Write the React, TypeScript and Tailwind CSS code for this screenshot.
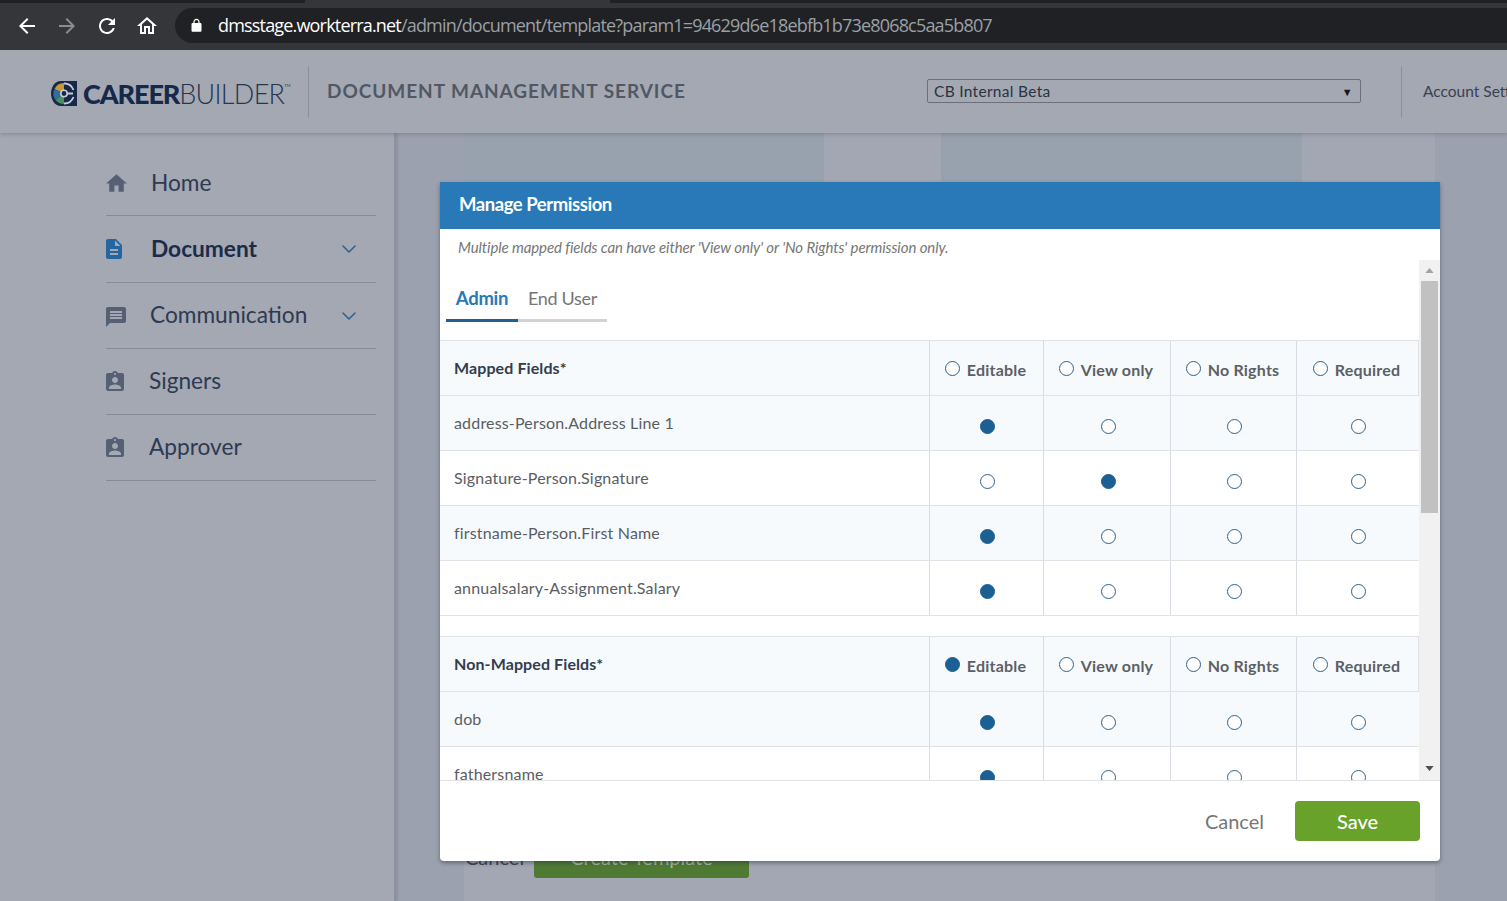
import type { ReactNode } from "react";
import { ChevronDown } from "lucide-react";

const paths = {
  back: "M20 11H7.83l5.59-5.59L12 4l-8 8 8 8 1.41-1.41L7.83 13H20v-2z",
  forward: "M12 4l-1.41 1.41L16.17 11H4v2h12.17l-5.58 5.59L12 20l8-8z",
  reload:
    "M17.65 6.35C16.2 4.9 14.21 4 12 4c-4.42 0-7.99 3.58-7.99 8s3.57 8 7.99 8c3.73 0 6.84-2.55 7.73-6h-2.08c-.82 2.33-3.04 4-5.65 4-3.31 0-6-2.69-6-6s2.69-6 6-6c1.66 0 3.14.69 4.22 1.78L13 11h7V4l-2.35 2.35z",
  homeOutline: "M12 5.69l5 4.5V18h-2v-6H9v6H7v-7.81l5-4.5M12 3L2 12h3v8h6v-6h2v6h6v-8h3L12 3z",
  lock: "M18 8h-1V6c0-2.76-2.24-5-5-5S7 3.24 7 6v2H6c-1.1 0-2 .9-2 2v10c0 1.1.9 2 2 2h12c1.1 0 2-.9 2-2V10c0-1.1-.9-2-2-2zM9 8V6c0-1.66 1.34-3 3-3s3 1.34 3 3v2H9z",
  home: "M10 20v-6h4v6h5v-8h3L12 3 2 12h3v8z",
  doc: "M14 2H6c-1.1 0-1.99.9-1.99 2L4 20c0 1.1.89 2 1.99 2H18c1.1 0 2-.9 2-2V8l-6-6zm2 16H8v-2h8v2zm0-4H8v-2h8v2zm-3-5V3.5L18.5 9H13z",
  message:
    "M20 2H4c-1.1 0-1.99.9-1.99 2L2 22l4-4h14c1.1 0 2-.9 2-2V4c0-1.1-.9-2-2-2zm-2 12H6v-2h12v2zm0-3H6V9h12v2zm0-3H6V6h12v2z",
  person:
    "M19 3h-4.18C14.4 1.84 13.3 1 12 1c-1.3 0-2.4.84-2.82 2H5c-1.1 0-2 .9-2 2v14c0 1.1.9 2 2 2h14c1.1 0 2-.9 2-2V5c0-1.1-.9-2-2-2zm-7 0c.55 0 1 .45 1 1s-.45 1-1 1-1-.45-1-1 .45-1 1-1zm0 4c1.66 0 3 1.34 3 3s-1.34 3-3 3-3-1.34-3-3 1.34-3 3-3zm6 12H6v-1.4c0-2 4-3.1 6-3.1s6 1.1 6 3.1V19z",
};

const Icon = ({ d, className }: { d: string; className: string }) => (
  <svg viewBox="0 0 24 24" fill="currentColor" className={className}>
    <path d={d} />
  </svg>
);

const nav = [
  { label: "Home", icon: paths.home, h: "h-[83px] pt-[18px]", icon2: "size-[25px] -ml-[2px]", textX: "ml-[22px]" },
  { label: "Document", icon: paths.doc, active: true, chevron: true, h: "h-[67px]", icon2: "size-[24px] -ml-[4px]", textX: "ml-[25px]" },
  { label: "Communication", icon: paths.message, chevron: true, h: "h-[66px]", icon2: "size-[24px] -ml-[2px] mt-[2px]", textX: "ml-[22px]" },
  { label: "Signers", icon: paths.person, h: "h-[66px]", icon2: "size-[24px] -ml-[3px]", textX: "ml-[22px]" },
  { label: "Approver", icon: paths.person, h: "h-[66px]", icon2: "size-[24px] -ml-[3px]", textX: "ml-[22px]" },
];

// which radio is on in each row: 0 editable, 1 view only
const mapped = [
  { name: "address-Person.Address Line 1", on: 0, tint: true },
  { name: "Signature-Person.Signature", on: 1 },
  { name: "firstname-Person.First Name", on: 0, tint: true },
  { name: "annualsalary-Assignment.Salary", on: 0 },
];
const nonMapped = [
  { name: "dob", on: 0, tint: true },
  { name: "fathersname", on: 0 },
];
const columns = ["Editable", "View only", "No Rights", "Required"];

const gridCols = "grid grid-cols-[489px_114px_127px_126px_122px]";

const Radio = ({ on }: { on?: boolean }) => (
  <span
    className={
      "block size-[15px] shrink-0 rounded-full border " +
      (on ? "border-[#1c5f93] bg-[#1c5f93]" : "border-[#2f6189] bg-white")
    }
  />
);

const Cell = ({ children, first }: { children: ReactNode; first?: boolean }) => (
  <div className={"flex h-[54px] items-center " + (first ? "pl-[14px]" : "justify-center border-l border-[#d9dde3]")}>
    {children}
  </div>
);

const HeaderRow = ({ title, on }: { title: string; on?: number }) => (
  <div className={gridCols + " w-[979px] border-y border-r border-[#dfe3e8] bg-[#f6fafd]"}>
    <Cell first>
      <span className="text-[16px] font-bold tracking-[0.1px] text-[#333d4f]">{title}</span>
    </Cell>
    {columns.map((c, i) => (
      <Cell key={c}>
        <span className="mr-[2px] mt-[4px] flex items-center gap-[7px]">
          <span className="mb-[3px]">
            <Radio on={on === i} />
          </span>
          <span className="text-[16px] font-bold tracking-[0.2px] text-[#5c5f66]">{c}</span>
        </span>
      </Cell>
    ))}
  </div>
);

const FieldRow = ({ name, on, tint }: { name: string; on: number; tint?: boolean }) => (
  <div className={gridCols + " border-b border-[#dfe3e8] " + (tint ? "bg-[#f6fafd]" : "bg-white")}>
    <Cell first>
      <span className="mb-[1px] text-[16px] tracking-[0.17px] text-[#5a5d63]">{name}</span>
    </Cell>
    {columns.map((c, i) => (
      <Cell key={c}>
        <span className="ml-[2px] mt-[6px]">
          <Radio on={on === i} />
        </span>
      </Cell>
    ))}
  </div>
);

const Logo = () => (
  <div className="mt-[4px] flex items-center">
    <svg viewBox="0 0 26 26" className="size-[26px]">
      <path d="M10 0H26V25H10C3 25 0 18 0 12.5S3 0 10 0z" fill="#16294a" />
      <path d="M13 2A10.5 10.5 0 0 0 3.5 8L13 12.5z" fill="#c69a3a" />
      <path d="M3.5 8A10.5 10.5 0 0 0 4.5 19L13 12.5z" fill="#2f6f9f" />
      <path d="M4.5 19A10.5 10.5 0 0 0 13 23L13 12.5z" fill="#4d8d5f" />
      <path
        d="M13 2.5A10 10 0 0 1 22.5 9M22.5 16A10 10 0 0 1 13 22.5M10 12.5H22"
        fill="none"
        stroke="#c9ccd4"
        strokeWidth="1.8"
      />
      <circle cx="13" cy="12.5" r="3.2" fill="#16294a" stroke="#c9ccd4" strokeWidth="1.6" />
    </svg>
    <span className="ml-[6px] text-[27px] font-black leading-none tracking-[-1.1px] text-[#16294a]">CAREER</span>
    <span className="text-[27px] font-light leading-none tracking-[-0.7px] text-[#27354f]">BUILDER</span>
    <span className="mb-[15px] text-[4px] leading-none text-[#27354f]">TM</span>
  </div>
);

const App = () => {
  return (
    <div className="relative h-[901px] w-full overflow-hidden bg-[#9ca1af] font-[Lato,sans-serif]">
      {/* Browser toolbar */}
      <div className="h-[50px] bg-[#35363a]">
        <div className="flex h-[3px] justify-between">
          <div className="w-[305px] bg-[#202124]" />
          <div className="w-[897px] bg-[#202124]" />
        </div>
        <div className="flex h-[47px] items-start pt-[5px]">
          <div className="flex h-[35px] w-[175px] shrink-0 items-center pl-[15px] text-white">
            <Icon d={paths.back} className="size-[24px]" />
            <Icon d={paths.forward} className="ml-[16px] size-[24px] text-[#8a8c90]" />
            <Icon d={paths.reload} className="ml-[16px] size-[24px]" />
            <Icon d={paths.homeOutline} className="ml-[16px] size-[24px]" />
          </div>
          <div className="flex h-[35px] flex-1 items-center rounded-l-full bg-[#202124] pl-[14px]">
            <Icon d={paths.lock} className="size-[15px] text-white" />
            <span className="ml-[14px] whitespace-nowrap font-['Open_Sans',sans-serif] text-[18px] tracking-[-0.82px] text-[#9aa0a6]">
              <span className="text-white">dmsstage.workterra.net</span>
              /admin/document/template?param1=94629d6e18ebfb1b73e8068c5aa5b807
            </span>
          </div>
        </div>
      </div>

      {/* App header */}
      <header className="relative z-10 flex h-[83px] items-center bg-[#a3a8b3] shadow-[0_1px_4px_rgba(60,70,90,0.35)]">
        <div className="flex h-[52px] w-[309px] shrink-0 items-center border-r border-[#8b909c] pl-[51px]">
          <Logo />
        </div>
        <div className="ml-[18px] w-[600px] shrink-0 whitespace-nowrap text-[19px] font-bold tracking-[0.95px] text-[#515863]">
          DOCUMENT MANAGEMENT SERVICE
        </div>
        <div className="-mt-[1px] flex h-[24px] w-[434px] shrink-0 items-center justify-between rounded-[2px] border border-[#6a6f7b] pl-[6px] pr-[7px] pt-[2px] text-[15.5px] tracking-[0.3px] text-[#2b3240]">
          <span>CB Internal Beta</span>
          <span className="text-[11px] text-[#15181f]">▼</span>
        </div>
        <div className="ml-[40px] flex h-[52px] flex-1 items-center whitespace-nowrap border-l border-[#8b909c] pl-[21px] text-[15.5px] text-[#3a4150]">
          Account Settings
        </div>
      </header>

      <div className="flex h-[768px]">
        {/* Sidebar */}
        <aside className="w-[396px] shrink-0 border-r-2 border-[#8d929f] bg-[#a3a8b3] pl-[106px] pr-[18px] shadow-[1px_0_3px_rgba(60,70,90,0.25)]">
          {nav.map((n) => (
            <div key={n.label} className={"flex items-center border-b border-[#868c99] " + n.h}>
              <Icon d={n.icon} className={n.icon2 + " " + (n.active ? "text-[#24669f]" : "text-[#556075]")} />
              <span
                className={
                  "text-[22.7px] " + n.textX + " " + (n.active ? "font-bold text-[#1c2b4a]" : "text-[#2e3a52]")
                }
              >
                {n.label}
              </span>
              {n.chevron && <ChevronDown className="ml-auto mr-[15px] size-[24px] text-[#2f5f8c]" strokeWidth={1.5} />}
            </div>
          ))}
        </aside>

        {/* Page behind the dialog */}
        <main className="flex-1 pl-[68px]">
          <div className="flex h-full w-[971px] flex-col bg-[#a2a7b3]">
            <div className="flex h-[49px] gap-[117px]">
              <div className="w-[360px] bg-[#98a1ae]" />
              <div className="w-[361px] bg-[#98a1ae]" />
            </div>
            <div className="mb-[23px] mt-auto flex h-[40px] items-center pl-[1px]">
              <span className="mb-[3px] w-[69px] text-[20px] text-[#3e4450]">Cancel</span>
              <span className="flex h-full w-[215px] items-center justify-center rounded-[3px] bg-[#4f7a33] pb-[3px] text-[20px] text-[#a8b9a0]">
                Create Template
              </span>
            </div>
          </div>
        </main>
      </div>

      {/* Manage Permission dialog */}
      <div className="absolute left-[440px] top-[182px] z-20 flex h-[679px] w-[1000px] flex-col rounded-b-[4px] bg-white shadow-[0_2px_4px_rgba(30,35,50,0.45)]">
        <div className="flex h-[47px] shrink-0 items-center bg-[#2979b9] pb-[2px] pl-[19px] text-[18.5px] font-bold tracking-[-0.45px] text-white">
          Manage Permission
        </div>
        <div className="flex h-[31px] shrink-0 items-center pl-[18px] pt-[6px] text-[15px] italic tracking-[-0.1px] text-[#767676]">
          Multiple mapped fields can have either 'View only' or 'No Rights' permission only.
        </div>
        <div className="flex h-[520px] shrink-0 overflow-hidden">
          <div className="w-[979px] shrink-0">
            <div className="flex h-[62px] items-end pl-[6px]">
              <div className="flex h-[44px] w-[72px] justify-center border-b-[3px] border-[#20608f] bg-white pt-[7px] text-[18.5px] font-bold tracking-[-0.3px] text-[#2979b9]">
                Admin
              </div>
              <div className="flex h-[44px] w-[89px] justify-center border-b-[3px] border-[#d2d2d2] pt-[7px] text-[18px] tracking-[-0.3px] text-[#767676]">
                End User
              </div>
            </div>
            <div className="mt-[18px]">
              <HeaderRow title="Mapped Fields*" />
              {mapped.map((r) => (
                <FieldRow key={r.name} {...r} />
              ))}
              <div className="h-[20px]" />
              <HeaderRow title="Non-Mapped Fields*" on={0} />
              {nonMapped.map((r) => (
                <FieldRow key={r.name} {...r} />
              ))}
            </div>
          </div>
          {/* Scrollbar */}
          <div className="flex w-[21px] flex-col items-center bg-[#f1f1f1]">
            <svg viewBox="0 0 10 6" className="mt-[8px] h-[5px] w-[9px] fill-[#a3a3a3]">
              <polygon points="5,0 10,6 0,6" />
            </svg>
            <div className="mt-[8px] h-[232px] w-[17px] bg-[#c1c1c1]" />
            <svg viewBox="0 0 10 6" className="mb-[9px] mt-auto h-[5px] w-[9px] fill-[#505050]">
              <polygon points="0,0 10,0 5,6" />
            </svg>
          </div>
        </div>
        <div className="flex flex-1 items-center justify-end border-t border-[#e3e3e3] pr-[20px]">
          <button className="mr-[31px] text-[20px] text-[#767676]">Cancel</button>
          <button className="h-[40px] w-[125px] rounded-[4px] bg-[#69a22b] text-[20px] font-medium text-white">
            Save
          </button>
        </div>
      </div>
    </div>
  );
};

export default App;
